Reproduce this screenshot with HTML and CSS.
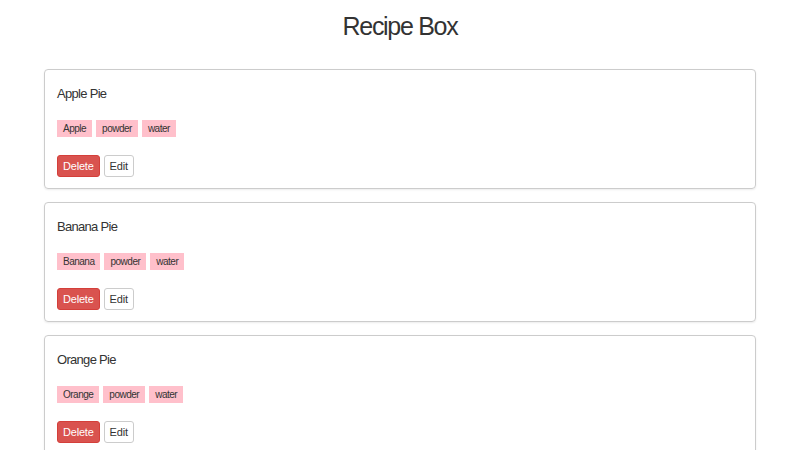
FILE: index.html
```html
<!DOCTYPE html>
<html lang="en">
<head>
    <meta charset="UTF-8">
    <meta name="viewport" content="width=device-width, initial-scale=1.0">
    <title>Recipe Box</title>
    <link rel="stylesheet" href="styles.css">
</head>
<body>
    <h1 class="title">Recipe Box</h1>

    <div class="recipes">
        <div class="recipe">
            <h4>Apple Pie</h4>
            <div class="ingredients">
                <span class="tag">Apple</span>
                <span class="tag">powder</span>
                <span class="tag">water</span>
            </div>
            <div class="actions">
                <button class="btn btn-danger">Delete</button>
                <button class="btn btn-default">Edit</button>
            </div>
        </div>

        <div class="recipe">
            <h4>Banana Pie</h4>
            <div class="ingredients">
                <span class="tag">Banana</span>
                <span class="tag">powder</span>
                <span class="tag">water</span>
            </div>
            <div class="actions">
                <button class="btn btn-danger">Delete</button>
                <button class="btn btn-default">Edit</button>
            </div>
        </div>

        <div class="recipe">
            <h4>Orange Pie</h4>
            <div class="ingredients">
                <span class="tag">Orange</span>
                <span class="tag">powder</span>
                <span class="tag">water</span>
            </div>
            <div class="actions">
                <button class="btn btn-danger">Delete</button>
                <button class="btn btn-default">Edit</button>
            </div>
        </div>
    </div>
</body>
</html>
```

FILE: styles.css
```css
body {
    font-family: "Liberation Sans", Arial, sans-serif;
    color: #333;
    margin: 0;
    background-color: #fff;
}
.title {
    text-align: center;
    font-size: 25px;
    font-weight: normal;
    letter-spacing: -1.3px;
    margin: 11px 0 28px;
    line-height: 30px;
}
.recipes {
    width: 712px;
    margin: 0 auto;
}
.recipe {
    border: 1px solid #ccc;
    border-radius: 4px;
    box-shadow: 0 1px 2px rgba(0,0,0,0.08);
    padding: 15px 12px 11px;
    margin-bottom: 13px;
}
.recipe h4 {
    font-size: 13px;
    font-weight: normal;
    letter-spacing: -0.7px;
    margin: 0 0 17px;
    line-height: 18px;
}
.ingredients {
    display: flex;
    gap: 4px;
    margin-bottom: 18px;
}
.tag {
    background-color: pink;
    font-size: 10px;
    letter-spacing: -0.5px;
    line-height: 17px;
    padding: 0 6px;
}
.actions {
    display: flex;
    gap: 4px;
}
.btn {
    font-family: inherit;
    font-size: 11px;
    letter-spacing: -0.2px;
    line-height: 14px;
    height: 22px;
    padding: 3px 5px;
    border: 1px solid #ccc;
    border-radius: 3px;
    cursor: pointer;
}
.btn-danger {
    background-color: #d9534f;
    border-color: #d43f3a;
    color: #fff;
}
.btn-default {
    background-color: #fff;
    color: #333;
}
```
